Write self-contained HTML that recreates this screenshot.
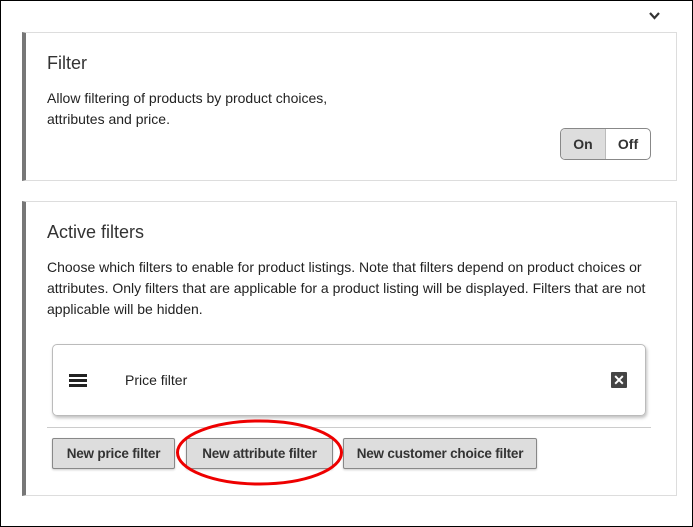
<html><head><style>
body{margin:0;width:693px;height:527px;overflow:hidden;background:#fff;font-family:"Liberation Sans",sans-serif;color:#222}
.frame{position:absolute;left:0;top:0;width:691px;height:525px;border:1px solid #000}
.p{position:absolute;left:22px;width:650px;border:1px solid #ddd;border-left:4px solid #777;background:#fff}
.t{position:absolute;font-size:18px;color:#333;letter-spacing:0;white-space:nowrap}
.l{position:absolute;font-size:14px;letter-spacing:0;white-space:nowrap;color:#222}
.b{position:absolute;top:438px;height:31px;background:#ddd;border:1px solid #888;border-radius:2px;font-size:13.5px;font-weight:bold;color:#333;letter-spacing:-0.2px;display:flex;align-items:center;justify-content:center;box-sizing:border-box;box-shadow:0 1px 2px rgba(0,0,0,.2)}
</style></head><body>
<div class="frame"></div>
<svg style="position:absolute;left:648px;top:11px" width="13" height="10"><path d="M2 2 L6.5 7 L11 2" stroke="#333" stroke-width="2.2" fill="none"/></svg>
<div class="p" style="top:32px;height:147px"></div>
<div class="t" style="left:47px;top:53px">Filter</div>
<div class="l" style="left:47px;top:90px">Allow filtering of products by product choices,</div>
<div class="l" style="left:47px;top:111px">attributes and price.</div>
<div style="position:absolute;left:560px;top:128px;width:89px;height:30px;border:1px solid #888;border-radius:5px;overflow:hidden;display:flex;font-size:14px;color:#333">
<div style="width:44px;background:#ddd;border-right:1px solid #bbb;display:flex;align-items:center;justify-content:center;font-weight:bold">On</div>
<div style="flex:1;display:flex;align-items:center;justify-content:center;font-weight:bold">Off</div></div>
<div class="p" style="top:201px;height:293px"></div>
<div class="t" style="left:47px;top:222px">Active filters</div>
<div class="l" style="left:47px;top:259px">Choose which filters to enable for product listings. Note that filters depend on product choices or</div>
<div class="l" style="left:47px;top:280px">attributes. Only filters that are applicable for a product listing will be displayed. Filters that are not</div>
<div class="l" style="left:47px;top:301px">applicable will be hidden.</div>
<div style="position:absolute;left:52px;top:344px;width:592px;height:70px;border:1px solid #bbb;border-radius:5px;box-shadow:1px 2px 3px rgba(0,0,0,.25)"></div>
<div style="position:absolute;left:69px;top:374px;width:18px;height:3px;background:#222;box-shadow:0 5px 0 #222,0 10px 0 #222"></div>
<div class="l" style="left:125px;top:372px">Price filter</div>
<div style="position:absolute;left:611px;top:372px;width:16px;height:16px;background:#444;border-radius:1px;color:#fff;font-weight:bold;font-size:14px;line-height:16px;text-align:center">✕</div>
<div style="position:absolute;left:47px;top:427px;width:604px;height:1px;background:#ccc"></div>
<div class="b" style="left:52px;width:123px">New price filter</div>
<div class="b" style="left:186px;width:147px">New attribute filter</div>
<div class="b" style="left:343px;width:194px">New customer choice filter</div>
<svg style="position:absolute;left:0;top:0" width="693" height="527"><ellipse cx="259.5" cy="452.5" rx="82" ry="31.5" fill="none" stroke="#e00" stroke-width="3"/></svg>
</body></html>
